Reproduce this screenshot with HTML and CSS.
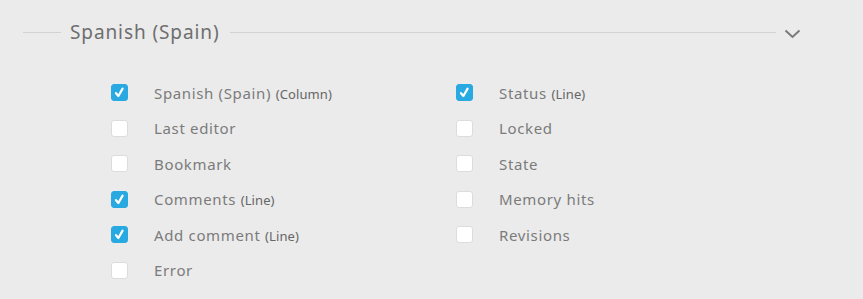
FILE: index.html
```html
<!DOCTYPE html>
<html>
<head>
<meta charset="utf-8">
<link rel="stylesheet" href="styles.css">
</head>
<body>
<section class="panel">
  <header class="head">
    <span class="rule short"></span>
    <h2 class="title">Spanish (Spain)</h2>
    <span class="rule long"></span>
    <svg class="chev" width="17" height="10" viewBox="0 0 17 10"><path d="M1.5 1.5 L8.5 8 L15.5 1.5" fill="none" stroke="#7a7a7a" stroke-width="2"/></svg>
  </header>
  <div class="grid">
    <div class="col">
      <label class="item"><span class="box on"><svg viewBox="0 0 17 17" width="17" height="17"><path d="M5 9.2 L7.4 12 L11.6 4.6" fill="none" stroke="#fff" stroke-width="2.2" stroke-linecap="round" stroke-linejoin="round"/></svg></span><span class="lbl">Spanish (Spain) <small>(Column)</small></span></label>
      <label class="item"><span class="box"></span><span class="lbl">Last editor</span></label>
      <label class="item"><span class="box"></span><span class="lbl">Bookmark</span></label>
      <label class="item"><span class="box on"><svg viewBox="0 0 17 17" width="17" height="17"><path d="M5 9.2 L7.4 12 L11.6 4.6" fill="none" stroke="#fff" stroke-width="2.2" stroke-linecap="round" stroke-linejoin="round"/></svg></span><span class="lbl">Comments <small>(Line)</small></span></label>
      <label class="item"><span class="box on"><svg viewBox="0 0 17 17" width="17" height="17"><path d="M5 9.2 L7.4 12 L11.6 4.6" fill="none" stroke="#fff" stroke-width="2.2" stroke-linecap="round" stroke-linejoin="round"/></svg></span><span class="lbl">Add comment <small>(Line)</small></span></label>
      <label class="item"><span class="box"></span><span class="lbl">Error</span></label>
    </div>
    <div class="col">
      <label class="item"><span class="box on"><svg viewBox="0 0 17 17" width="17" height="17"><path d="M5 9.2 L7.4 12 L11.6 4.6" fill="none" stroke="#fff" stroke-width="2.2" stroke-linecap="round" stroke-linejoin="round"/></svg></span><span class="lbl">Status <small>(Line)</small></span></label>
      <label class="item"><span class="box"></span><span class="lbl">Locked</span></label>
      <label class="item"><span class="box"></span><span class="lbl">State</span></label>
      <label class="item"><span class="box"></span><span class="lbl">Memory hits</span></label>
      <label class="item"><span class="box"></span><span class="lbl">Revisions</span></label>
    </div>
  </div>
</section>
</body>
</html>
```
FILE: styles.css
```css
html, body { margin: 0; padding: 0; }
body {
  background: #ebebeb;
  font-family: "Noto Sans", "Open Sans", sans-serif;
  width: 863px;
  height: 299px;
  overflow: hidden;
}
.panel { padding: 0 0 0 23px; }
.head {
  display: flex;
  align-items: center;
  height: 33px;
  margin-top: 16px;
  width: 778px;
}
.rule { height: 1px; background: #d2d2d2; display: block; }
.rule.short { width: 38px; margin-right: 9px; }
.rule.long { flex: 1; margin-left: 10px; }
.title {
  margin: 0;
  font-weight: 400;
  font-size: 19px;
  color: #6e6e6e;
  letter-spacing: 0.9px;
  line-height: 33px;
}
.chev { margin-left: 8px; margin-top: 2px; flex: none; }
.grid {
  display: flex;
  padding-left: 88px;
  margin-top: 26px;
}
.col { width: 345px; display: flex; flex-direction: column; }
.item {
  display: flex;
  align-items: center;
  height: 35.5px;
}
.box {
  width: 17px;
  height: 17px;
  box-sizing: border-box;
  border-radius: 3px;
  background: #fff;
  border: 1px solid #dcdcdc;
  flex: none;
  display: block;
}
.box.on { background: #29a9e1; border-color: #29a9e1; }
.box svg { display: block; margin: -1px; }
.lbl {
  margin-left: 26px;
  font-size: 15px;
  color: #7b7b7b;
  letter-spacing: 0.65px;
}
.lbl small { font-size: 13px; color: #666; letter-spacing: 0.1px; }
```
